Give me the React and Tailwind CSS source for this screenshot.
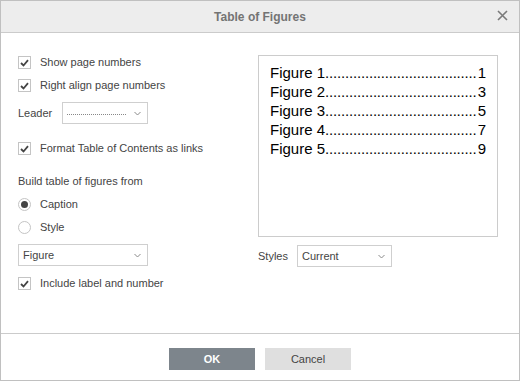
import React from "react";

const font = { fontFamily: '"Liberation Sans", Arial, sans-serif' };

function Chevron() {
  return (
    <svg width="7" height="5" viewBox="0 0 7 5" className="shrink-0">
      <path d="M0.5 1 L3.5 4 L6.5 1" fill="none" stroke="#8a8a8a" strokeWidth="1" />
    </svg>
  );
}

function Check({ label }) {
  return (
    <div className="flex items-center h-[13px] gap-[9px]">
      <div className="w-[13px] h-[13px] border border-[#c4c4c4] bg-white flex items-center justify-center">
        <svg width="9" height="8" viewBox="0 0 9 8">
          <path d="M1 4 L3.5 6.5 L8 1.2" fill="none" stroke="#444" strokeWidth="1.8" />
        </svg>
      </div>
      <span className="text-[11px] text-[#444]">{label}</span>
    </div>
  );
}

function Radio({ label, checked }) {
  return (
    <div className="flex items-center h-[13px] gap-[9px]">
      <div className="w-[13px] h-[13px] rounded-full border border-[#c4c4c4] bg-white flex items-center justify-center">
        {checked && <div className="w-[7px] h-[7px] rounded-full bg-[#444]" />}
      </div>
      <span className="text-[11px] text-[#444]">{label}</span>
    </div>
  );
}

function Select({ children, className }) {
  return (
    <div className={"h-[22px] border border-[#cfcfcf] bg-white flex items-center pl-[4px] pr-[6px] " + className}>
      <div className="flex-1 text-[11px] text-[#444] overflow-hidden">{children}</div>
      <Chevron />
    </div>
  );
}

const rows = [
  ["Figure 1", "1"],
  ["Figure 2", "3"],
  ["Figure 3", "5"],
  ["Figure 4", "7"],
  ["Figure 5", "9"],
];

const dots = ".".repeat(38);

export default function App() {
  return (
    <div style={font} className="w-[520px] h-[381px] border border-[#c0c0c0] bg-white flex flex-col">
      <div className="h-[32px] shrink-0 bg-[#ededed] border-b border-[#cbcbcb] relative flex items-center justify-center">
        <span className="text-[12px] font-bold text-[#747474]">Table of Figures</span>
        <svg width="11" height="11" viewBox="0 0 11 11" className="absolute right-[11px] top-[9px]">
          <path d="M1 1 L10 10 M10 1 L1 10" stroke="#7a7a7a" strokeWidth="1.6" />
        </svg>
      </div>

      <div className="flex-1 flex">
        <div className="w-[240px] pl-[17px] pt-[23px] flex flex-col">
          <Check label="Show page numbers" />
          <div className="mt-[10px]">
            <Check label="Right align page numbers" />
          </div>
          <div className="mt-[10px] flex items-center">
            <span className="w-[44px] text-[11px] text-[#444]">Leader</span>
            <Select className="w-[86px]">
              <div className="border-b border-dotted border-[#888] mr-[8px] mt-[3px]" />
            </Select>
          </div>
          <div className="mt-[18px]">
            <Check label="Format Table of Contents as links" />
          </div>
          <div className="mt-[20px] text-[11px] text-[#444] leading-[13px]">Build table of figures from</div>
          <div className="mt-[10px]">
            <Radio label="Caption" checked />
          </div>
          <div className="mt-[10px]">
            <Radio label="Style" />
          </div>
          <div className="mt-[10px]">
            <Select className="w-[130px]">Figure</Select>
          </div>
          <div className="mt-[11px]">
            <Check label="Include label and number" />
          </div>
        </div>

        <div className="flex-1 pl-[17px] pt-[22px] flex flex-col">
          <div className="w-[240px] h-[182px] border border-[#cccccc] pl-[11px] pr-[11px] pt-[7px] text-[15px] text-black leading-[19px]">
            {rows.map(([name, page]) => (
              <div key={name} className="flex">
                <span className="shrink-0">{name}</span>
                <span className="flex-1 whitespace-nowrap tracking-[-0.18px]">{dots}</span>
                <span className="shrink-0">{page}</span>
              </div>
            ))}
          </div>
          <div className="mt-[8px] flex items-center">
            <span className="w-[39px] text-[11px] text-[#444]">Styles</span>
            <Select className="w-[95px]">Current</Select>
          </div>
        </div>
      </div>

      <div className="h-[47px] shrink-0 border-t border-[#cbcbcb] flex justify-center gap-[10px] pt-[14px]">
        <button className="w-[86px] h-[22px] bg-[#7d858c] text-white text-[11px] font-bold">OK</button>
        <button className="w-[86px] h-[22px] bg-[#dfdfdf] text-[#444] text-[11px]">Cancel</button>
      </div>
    </div>
  );
}
